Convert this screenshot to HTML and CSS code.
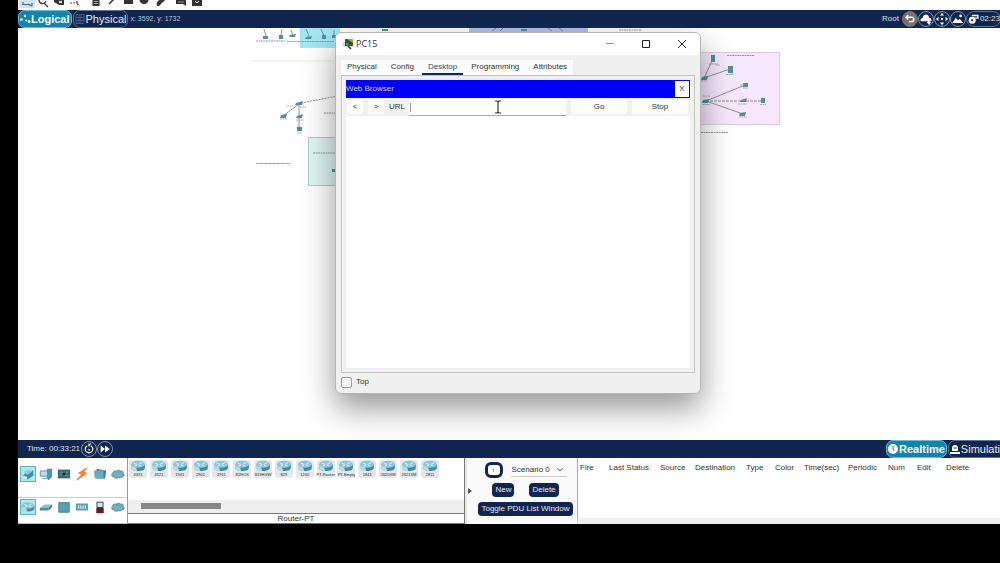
FILE: index.html
```html
<!DOCTYPE html>
<html lang="en">
<head>
    <meta charset="UTF-8">
    <meta name="viewport" content="width=device-width, initial-scale=1.0">
    <title>Packet Tracer - PC15</title>
    <link rel="stylesheet" href="styles.css">
</head>
<body>
    <!-- shared icons -->
    <svg class="defs" aria-hidden="true">
        <symbol id="router" viewBox="0 0 18 14">
            <path d="M1 5v4c0 5 16 5 16 0V5z" fill="#3f8ba3"/>
            <path d="M1 5v4c0 3 4 4 7 4L6 5z" fill="#b9dbe4"/>
            <ellipse cx="9" cy="5" rx="8" ry="4" fill="#8fc6d6"/>
            <path d="M4 4l4 1M14 3l-4 2M5 7l3-1M13 7l-3-1" stroke="#e8f6fa" stroke-width="1"/>
        </symbol>
        <symbol id="cloud" viewBox="0 0 16 12">
            <path d="M3 9.500C0 9 0 6 2 5.500 1.500 3 4 2 6 2.500 8 1 10 1.500 11 2.500c3-.5 3.500 1.500 3 3 2 1 1.500 4-1.500 4-1 1.500-3 1-4 .8C7 11.500 4 11 3 9.500z" fill="#6aa9bb" stroke="#3f7f93" stroke-width=".6"/>
            <path d="M3 6h9M5 8h7" stroke="#92c7d5" stroke-width=".7"/>
        </symbol>
    </svg>

    <div class="app">
        <div class="toolbar">
            <div class="tool-group">
                <button class="tool active" aria-label="Select"><svg viewBox="0 0 16 8"><path d="M3 4.500h8M4 2v2M9 4l4 2M13 3v3" stroke="#4a6a86" stroke-width="1.200" fill="none"/></svg></button>
                <button class="tool" aria-label="Inspect"><svg viewBox="0 0 16 8"><path d="M4 0c0 4 5 5 7 1M9 3l4 4" stroke="#444" stroke-width="1.400" fill="none"/></svg></button>
                <button class="tool" aria-label="Remove"><svg viewBox="0 0 16 8"><path d="M3 0h10v5H8L3 2z" fill="#333"/><path d="M8 1l3 2M11 1L8 3" stroke="#fff"/></svg></button>
                <button class="tool" aria-label="Resize"><svg viewBox="0 0 16 8"><path d="M3 3h8M10 1v3l3 2" stroke="#555" stroke-width="1.200" stroke-dasharray="2 1" fill="none"/></svg></button>
            </div>
            <div class="tool-group">
                <button class="tool" aria-label="Note"><svg viewBox="0 0 16 8"><path d="M4.500 0h7v6h-7z" fill="#333"/><path d="M6 1.500h4M6 3.500h4" stroke="#aaa"/></svg></button>
                <button class="tool" aria-label="Line"><svg viewBox="0 0 16 8"><path d="M5 4l5-5" stroke="#333" stroke-width="1.500"/></svg></button>
                <button class="tool" aria-label="Rectangle"><svg viewBox="0 0 16 8"><path d="M4 0h9v4H4z" fill="#333"/></svg></button>
                <button class="tool" aria-label="Ellipse"><svg viewBox="0 0 16 8"><ellipse cx="8" cy="0" rx="4.500" ry="4" fill="#333"/></svg></button>
                <button class="tool" aria-label="Freeform"><svg viewBox="0 0 16 8"><path d="M5 6c-1-3 1-6 3-6h5c-1 2-3 2-4 4-1 2-3 2-4 2z" fill="#333"/></svg></button>
            </div>
            <div class="tool-group">
                <button class="tool" aria-label="Simple PDU"><svg viewBox="0 0 16 8"><path d="M3 0h10v6l-3-2H3z" fill="#333"/><path d="M5 2h6" stroke="#999"/></svg></button>
                <button class="tool" aria-label="Complex PDU"><svg viewBox="0 0 16 8"><path d="M3 0h10v6H3z" fill="#333"/><path d="M6 1l2 2 2-2" stroke="#fff" fill="none"/></svg></button>
            </div>
        </div>

        <div class="bar">
            <button class="mode on"><svg class="ic" viewBox="0 0 12 12"><g fill="#fff"><circle cx="2.500" cy="6.500" r="1.300"/><circle cx="6" cy="3" r="1.200"/><circle cx="7" cy="7.500" r="1"/><circle cx="10" cy="8.500" r="1.500"/></g></svg>Logical</button>
            <button class="mode"><svg class="ic" viewBox="0 0 12 12"><path d="M2 1.500h8v9H2zM2 4.500h8M2 7.500h8M4 3h4M4 6h4M4 9h4" stroke="#4b618a" fill="none" stroke-width=".9"/></svg>Physical</button>
            <span class="coords">x: 3592, y: 1732</span>
            <div class="nav">
                <span class="root">Root</span>
                <button class="round back" aria-label="Back"><svg viewBox="0 0 16 16"><path d="M6 3.500L3.500 6 6 8.500M4 6h6c3 0 3 5 0 5H7" stroke="#fff" stroke-width="1.600" fill="none"/></svg></button>
                <button class="round" aria-label="New cluster"><svg viewBox="0 0 16 16"><path d="M2 10.500c-1-2 1-4 2.500-4 0-5 7-5 7 0 2.500 0 3.500 2.500 2.500 4h-1.500v3h-2.500v-3z" fill="#fff"/><path d="M9 12h5M11.500 9.500v5" stroke="#fff" stroke-width="1.300"/></svg></button>
                <button class="round" aria-label="Move object"><svg viewBox="0 0 16 16"><path d="M8 1l2.500 3h-5zM8 15l2.500-3h-5zM1 8l3-2.500v5zM15 8l-3-2.500v5z" fill="#fff"/><circle cx="8" cy="8" r="1.300" fill="#fff"/></svg></button>
                <button class="round" aria-label="Background"><svg viewBox="0 0 16 16"><path d="M1.500 12.500l4-6 2.500 3L10 8l4 4.500z" fill="#fff"/><circle cx="11" cy="4.500" r="1.600" fill="#fff"/></svg></button>
                <button class="clock"><svg viewBox="0 0 14 16"><circle cx="5.500" cy="9.500" r="4" fill="#fff"/><path d="M5 4h7v3H8" stroke="#fff" stroke-width="1.600" fill="none"/><circle cx="5.500" cy="9.500" r="1.300" fill="#10264f"/></svg>02:23</button>
            </div>
        </div>

        <div class="canvas">
            <svg class="topology" viewBox="18 28 982 412" aria-hidden="true">
                <!-- areas -->
                <path d="M300 28h40v20h-40z" fill="#a5e6f3"/>
                <path d="M469 28h119v12H469z" fill="#b3c1ea"/>
                <path d="M251 61h90" stroke="#d3f3d6" stroke-width="1"/>
                <path d="M308.500 137.500h40v48h-40z" fill="#dff7f4" stroke="#a9cfca"/>
                <path d="M690.500 52.500h89v72h-89z" fill="#f6e7fb" stroke="#dcc9e6"/>
                <!-- links -->
                <g stroke="#666" stroke-width=".7" fill="none">
                    <path d="M264 29l2 7M282 29l-1 7M291 30l2 6M306 29l3 7M321 29l3 7M334 30v5"/>
                    <path d="M299 104l-16 12M299 104v12M299 118v10"/>
                    <path d="M301 103l37-7" stroke-dasharray="2 1"/>
                    <path d="M704 78l9-19M704 78l26-9M706 101l39-16M706 101l37 13"/>
                    <path d="M706 101h56" stroke-dasharray="3 1"/>
                    <path d="M492 31l4-3M500 31l3-3M548 28l4 3M559 28l4 3"/>
                </g>
                <!-- devices -->
                <g fill="#4d919d">
                    <path d="M263 36h5v3h-5zM279 35h4v4h-4zM290 35l6-1-1 3h-6zM306 37l6-1-1 3h-6zM322 35h4v4h-4zM332 35h5v3h-5zM382 29h6v2h-6zM521 29h6v2h-6z"/>
                    <path d="M296 103l7-2-1 4h-7zM281 115l6-1-1 4h-6zM297 116l6-2-1 4h-6zM297 127h5v4h-5zM332 169h5v3h-5z"/>
                    <path d="M711 55h4v7h-4zM728 66h5v7h-5zM702 77l6-1-1 4h-6zM703 100l6-1-1 4h-6zM743 83h5v4h-5zM741 100l6-2-1 4h-6zM761 98h4v5h-4zM740 113l6-1-1 4h-6z"/>
                </g>
                <!-- tiny captions -->
                <g stroke="#999" stroke-width="1" stroke-dasharray="2 .5">
                    <path d="M256 41h29M287 41.500h47M619 30h23M256 163.500h34M313 153h24M324 113h14M727 55.500h27M701 132.500h27"/>
                    <path d="M280 119h7M296 120h8M297 133h5M287 106h6M300 107h6M709 64h9M726 74.500h7M701 81h6M702 104.500h8M743 88h5M738 104h9M760 104.500h6M739 117h8M703 96h7M716 65h4M740 85h5" stroke-width=".8"/>
                </g>
            </svg>

            <div class="window">
                <div class="title">
                    <svg class="logo" viewBox="0 0 12 12"><circle cx="3.500" cy="6.500" r="3" fill="#cfd8cc"/><path d="M3 1h8v7H3z" fill="#26583a"/><path d="M5 1h6v4z" fill="#d98f2b"/><path d="M4 5l3 1-2 2z" fill="#6cc04a"/><path d="M6 8l3 3" stroke="#333" stroke-width="1.500"/></svg>
                    <span>PC15</span>
                    <div class="win-buttons">
                        <button aria-label="Minimize"><svg viewBox="0 0 10 10"><path d="M1 4.500h8" stroke="#999"/></svg></button>
                        <button aria-label="Maximize"><svg viewBox="0 0 10 10"><path d="M1.500 1.500h7v7h-7z" stroke="#222" fill="none"/></svg></button>
                        <button aria-label="Close"><svg viewBox="0 0 10 10"><path d="M1 1l8 8M9 1L1 9" stroke="#222"/></svg></button>
                    </div>
                </div>
                <div class="tabs">
                    <button>Physical</button>
                    <button>Config</button>
                    <button class="current">Desktop</button>
                    <button>Programming</button>
                    <button>Attributes</button>
                </div>
                <div class="frame">
                    <div class="app-title">
                        <span>Web Browser</span>
                        <button aria-label="Close browser">X</button>
                    </div>
                    <div class="url-row">
                        <button class="arrow">&lt;</button>
                        <button class="arrow">&gt;</button>
                        <label for="url">URL</label>
                        <div class="url-field">
                            <input type="text" id="url">
                            <span class="caret"></span>
                            <svg class="ibeam" viewBox="0 0 8 14"><path d="M1 1h2l1 1 1-1h2M4 2v10M1 13h2l1-1 1 1h2" stroke="#333" stroke-width="1.200" fill="none"/></svg>
                        </div>
                        <button class="go">Go</button>
                        <button class="go">Stop</button>
                    </div>
                    <div class="page"></div>
                </div>
                <div class="top-row">
                    <input type="checkbox" id="top">
                    <label for="top">Top</label>
                </div>
            </div>
        </div>

        <div class="bar">
            <span class="time">Time: 00:33:21</span>
            <button class="round" aria-label="Power cycle devices"><svg viewBox="0 0 16 16"><path d="M6 4.200a4.300 4.300 0 1 0 4 0M8 2v3M7.500 3l3-1M8 8v2" stroke="#fff" stroke-width="1.400" fill="none"/></svg></button>
            <button class="round" aria-label="Fast forward"><svg viewBox="0 0 16 16"><path d="M3 4l5 4-5 4zM8 4l5.500 4L8 12z" fill="#fff"/></svg></button>
            <div class="modes">
                <button class="mode on"><svg class="ic" viewBox="0 0 12 12"><circle cx="6" cy="6" r="5" fill="#fff"/><path d="M6 3v3l1 2" stroke="#1483ae" fill="none"/></svg>Realtime</button>
                <button class="mode"><svg class="ic" viewBox="0 0 12 12"><path d="M3 8V5c0-4 6-4 6 0v3zM1 9h10v2H1z" fill="#fff"/><path d="M4.500 5h3" stroke="#10264f"/></svg>Simulation</button>
            </div>
        </div>

        <div class="bottom">
            <div class="palette">
                <div class="palette-row upper">
                    <button class="sel" aria-label="Network Devices"><svg viewBox="0 0 16 16"><path d="M2 10l4-4 8-2v6l-6 4H2z" fill="#3d8fa2"/><path d="M3 5l6-2 4 2-6 4z" fill="#8fcbd6"/><path d="M2 10l5 1v3H2z" fill="#d9f2f5"/></svg></button>
                    <button aria-label="End Devices"><svg viewBox="0 0 16 16"><path d="M9 2h6v9l-4 4-2-2z" fill="#4d98ad"/><path d="M1.500 4.500h8v6h-8z" fill="#b9dfe9" stroke="#4d98ad"/><path d="M2 13l8-1v2z" fill="#6cb0c3"/></svg></button>
                    <button aria-label="Components"><svg viewBox="0 0 16 16"><path d="M1 3h14v10H1z" fill="#3c6470"/><path d="M3 6h4M3 9h3M10 6h3M9 10h4" stroke="#6aa" /><circle cx="8" cy="8" r="1.500" fill="#122"/></svg></button>
                    <button aria-label="Connections"><svg viewBox="0 0 16 16"><path d="M14 1L4 7l4 1-6 7 11-8-4-1z" fill="#ff9416" stroke="#e5541c" stroke-width=".8"/></svg></button>
                    <button aria-label="Miscellaneous"><svg viewBox="0 0 16 16"><path d="M4 2l11 2-1 9H4z" fill="#3f8399"/><path d="M1 4h11v9H2z" fill="#68a9bc"/></svg></button>
                    <button aria-label="Multiuser"><svg viewBox="0 0 16 12"><use href="#cloud"/></svg></button>
                </div>
                <div class="palette-row">
                    <button class="sel" aria-label="Routers"><svg viewBox="0 0 18 14"><use href="#router"/></svg></button>
                    <button aria-label="Switches"><svg viewBox="0 0 16 16"><path d="M1 9l5-4h9l-4 4z" fill="#8ac2d1"/><path d="M1 9h10v3H1z" fill="#4b8fa4"/><path d="M11 9l4-4v3l-4 4z" fill="#35768a"/></svg></button>
                    <button aria-label="Hubs"><svg viewBox="0 0 16 16"><path d="M2 3h12v11H2z" fill="#5a9fb3" stroke="#3f8095"/></svg></button>
                    <button aria-label="Wireless Devices"><svg viewBox="0 0 16 16"><path d="M1 4h14v8H1z" fill="#5a9fb3"/><path d="M4 6v4M6 6v4M10 6v4M12 6v4M8 7v3" stroke="#e6f7fb"/></svg></button>
                    <button aria-label="Security"><svg viewBox="0 0 16 16"><path d="M4 2h8v13H4z" fill="#303a40"/><path d="M5 3h6v5H5z" fill="#cfe7ee"/><path d="M4 10h8v5H4z" fill="#7c1221"/></svg></button>
                    <button aria-label="WAN Emulation"><svg viewBox="0 0 16 12"><use href="#cloud"/></svg></button>
                </div>
            </div>

            <div class="devices">
                <div class="device-list" id="device-list"></div>
                <div class="scroll"><div class="thumb"></div></div>
                <div class="device-name">Router-PT</div>
            </div>

            <div class="splitter"><svg viewBox="0 0 4 6"><path d="M0 0l4 3-4 3z" fill="#555"/></svg></div>

            <div class="scenario">
                <div class="scenario-row">
                    <button class="info" aria-label="Scenario description">i</button>
                    <div class="select-box">
                        <select aria-label="Scenario"><option>Scenario 0</option></select>
                        <svg viewBox="0 0 8 6"><path d="M1.500 1.500L4 4l2.500-2.500" stroke="#777" fill="none"/></svg>
                    </div>
                </div>
                <div class="scenario-row spread">
                    <button class="dark">New</button>
                    <button class="dark">Delete</button>
                </div>
                <button class="dark">Toggle PDU List Window</button>
            </div>

            <div class="pdu">
                <table>
                    <thead>
                        <tr>
                            <th class="w28">Fire</th>
                            <th class="w51">Last Status</th>
                            <th class="w36">Source</th>
                            <th class="w51">Destination</th>
                            <th class="w28">Type</th>
                            <th class="w28">Color</th>
                            <th class="w45">Time(sec)</th>
                            <th class="w40">Periodic</th>
                            <th class="w28">Num</th>
                            <th class="w28">Edit</th>
                            <th>Delete</th>
                        </tr>
                    </thead>
                </table>
            </div>
        </div>
    </div>

    <script>
        const devices = ['4331', '4321', '1941', '2901', '2911', '819IOX', '819HGW', '829', '1240', 'PT-Router', 'PT-Empty', '1841', '2620XM', '2621XM', '2811'];
        const list = document.getElementById('device-list');

        for (let name of devices) {
            const btn = document.createElement('button');
            btn.className = 'device';
            btn.innerHTML = `
                <svg viewBox="0 0 18 14"><use href="#router"/></svg>
                <span>${name}</span>
            `;
            list.appendChild(btn);
        }
    </script>
</body>
</html>
```
FILE: styles.css
```css
* { box-sizing: border-box; }
body {
    margin: 0;
    background: #000;
    color: #333;
    font-family: "Liberation Sans", Arial, sans-serif;
    font-size: 8px;
    line-height: 10px;
    overflow: hidden;
}
button, input, select {
    font: inherit;
    color: inherit;
    margin: 0;
    padding: 0;
    border: none;
    background: none;
}
button { white-space: nowrap; }
svg { display: block; }
.defs { position: absolute; width: 0; height: 0; }
.app {
    display: flex;
    flex-direction: column;
    min-height: 100vh;
    padding: 0 0 39px 18px;
}

/* top toolbar */
.toolbar {
    display: flex;
    gap: 5px;
    height: 10px;
    padding-left: 1px;
    background: #fff;
}
.tool-group { display: flex; }
.tool { width: 16px; height: 8px; }
.tool.active { background: #cfe3f7; }

/* dark bars */
.bar {
    display: flex;
    align-items: center;
    height: 18px;
    background: #10264f;
    color: #dfe5ee;
    overflow: hidden;
}
.mode {
    display: flex;
    align-items: center;
    height: 18px;
    padding-right: 1px;
    border: 1px solid #5d7297;
    border-radius: 7px;
    font-size: 11px;
    flex-shrink: 0;
    color: #e6ebf3;
}
.mode.on {
    background: #1483ae;
    border-color: #6fb9d6;
    color: #fff;
    font-weight: bold;
    margin-right: 1px;
}
.ic { width: 12px; height: 12px; }
.coords { font-size: 7px; margin-left: 2px; color: #b9c4d6; }
.nav {
    display: flex;
    align-items: center;
    width: 118px;
    margin-left: auto;
}
.root { margin-right: 3px; }
.round {
    width: 16px;
    height: 16px;
    border: 1px solid #8393b0;
    border-radius: 50%;
    flex-shrink: 0;
}
.round.back { background: #77736f; border-color: #77736f; }
.clock {
    display: flex;
    align-items: center;
    height: 16px;
    flex-shrink: 0;
    border: 1px solid #5d7297;
    border-radius: 8px;
}
.clock svg { width: 13px; height: 14px; }
.time { margin: 0 1px 0 9px; }
.modes { display: flex; width: 114px; margin-left: auto; }

/* workspace */
.canvas {
    position: relative;
    flex: 1;
    min-height: 412px;
    background: #fff;
    overflow: hidden;
}
.topology { position: absolute; left: 0; top: 0; width: 982px; height: 412px; }
.window {
    position: absolute;
    left: 317px;
    top: 4px;
    width: 366px;
    height: 362px;
    display: flex;
    flex-direction: column;
    background: #f0f0f0;
    border: 1px solid #b5b5b5;
    border-radius: 6px;
    box-shadow: 0 14px 32px rgba(0,0,0,0.42);
}
.title {
    display: flex;
    align-items: center;
    gap: 2px;
    height: 22px;
    padding-left: 6px;
    background: #fff;
    border-radius: 5px 5px 0 0;
    font-family: "Open Sans", sans-serif;
    font-size: 9px;
}
.logo { width: 12px; height: 12px; }
.win-buttons { display: flex; margin-left: auto; }
.win-buttons button { display: flex; justify-content: center; width: 36px; }
.win-buttons svg { width: 10px; height: 10px; }
.tabs {
    display: flex;
    align-self: flex-start;
    gap: 2px;
    margin: 5px 0 0 5px;
    background: #fbfbfb;
}
.tabs button { height: 15px; padding: 0 6px; border-bottom: 2px solid transparent; }
.tabs .current { color: #2b4a80; border-color: #10264f; }
.frame {
    display: flex;
    flex-direction: column;
    flex: 1;
    margin: 0 5px;
    padding: 4px;
    border: 1px solid #c4c4c4;
}
.app-title {
    display: flex;
    align-items: center;
    justify-content: space-between;
    height: 18px;
    background: #0000fb;
    color: #d8d8ff;
}
.app-title button { width: 14px; height: 16px; background: #fff; color: #333; margin-right: 1px; }
.url-row { display: flex; align-items: center; height: 18px; gap: 5px; padding: 0 2px 0 1px; }
.url-row button { background: #fdfdfd; height: 14px; border-radius: 2px; }
.url-row .arrow { width: 16px; }
.url-field { position: relative; flex: 1; height: 17px; margin-left: -1px; }
.url-field input { width: 100%; height: 17px; background: #fff; border-bottom: 1px solid #aaa; }
.caret { position: absolute; left: 1px; top: 4px; width: 1px; height: 9px; background: #999; }
.ibeam { position: absolute; left: 85px; top: 1px; width: 8px; height: 14px; }
.url-row .go { width: 56px; }
.page { flex: 1; background: #fff; }
.top-row { display: flex; align-items: center; gap: 4px; height: 20px; padding: 0 0 2px 5px; }
.top-row input {
    appearance: none;
    width: 11px;
    height: 11px;
    background: #f7f7f7;
    border: 1px solid #999;
    border-radius: 2px;
}

/* bottom panel */
.bottom { display: flex; height: 66px; background: #fff; }
.palette { width: 110px; border-right: 1px solid #999; border-bottom: 1px solid #bbb; }
.palette-row { display: flex; align-items: center; gap: 2px; padding: 1px 2px; }
.palette-row.upper { height: 40px; padding-top: 8px; align-items: flex-start; border-bottom: 1px solid #ccc; }
.palette-row button { width: 16px; height: 16px; padding: 1px; }
.palette-row svg { width: 14px; height: 14px; }
.palette-row .sel { background: #a9eaf0; border: 1px solid #5fb5bf; padding: 0; }
.devices { display: flex; flex-direction: column; width: 337px; border-right: 1px solid #777; }
.device-list {
    display: flex;
    justify-content: space-between;
    flex: 1;
    padding: 2px 25px 0 1px;
}
.device { width: 18px; height: 18px; background: #e4e8ea; border-radius: 3px; }
.device svg { width: 16px; height: 12px; margin: 0 auto; }
.device span {
    display: flex;
    justify-content: center;
    font-size: 4px;
    line-height: 6px;
    color: #222;
}
.scroll { height: 13px; padding: 3px 13px; background: #efefef; }
.thumb { width: 80px; height: 6px; background: #878787; }
.device-name { height: 11px; border: solid #777; border-width: 1px 0; text-align: center; line-height: 9px; }
.splitter {
    display: flex;
    align-items: center;
    width: 9px;
    padding-left: 1px;
    border-left: 2px solid #e6e6e6;
    background: #fafafa;
}
.splitter svg { width: 4px; height: 6px; }
.scenario {
    display: flex;
    flex-direction: column;
    align-items: center;
    gap: 5px;
    width: 103px;
    padding-top: 4px;
    background: #fafafa;
}
.scenario-row { display: flex; align-items: center; gap: 8px; }
.scenario-row.spread { gap: 15px; }
.info {
    width: 18px;
    height: 16px;
    background: #fff;
    border: 3px solid #10264f;
    border-radius: 6px;
    font-size: 6px;
    line-height: 8px;
}
.select-box { position: relative; border-bottom: 1px solid #ccc; }
.select-box select { appearance: none; width: 56px; height: 13px; padding-left: 1px; }
.select-box svg { position: absolute; right: 3px; top: 4px; width: 8px; height: 6px; }
.dark {
    height: 14px;
    padding: 0 3px;
    background: #10264f;
    color: #e6ebf3;
    border-radius: 4px;
}
.pdu {
    flex: 1;
    min-width: 0;
    background: #fff;
    border-left: 1px solid #aaa;
    border-bottom: 6px solid #efefef;
    overflow: hidden;
}
.pdu table { width: 100%; table-layout: fixed; border-collapse: collapse; }
.pdu th { padding: 5px 0 4px 2px; text-align: left; font-weight: normal; }
.w28 { width: 29px; }
.w36 { width: 35px; }
.w40 { width: 40px; }
.w45 { width: 44px; }
.w51 { width: 51px; }
```
